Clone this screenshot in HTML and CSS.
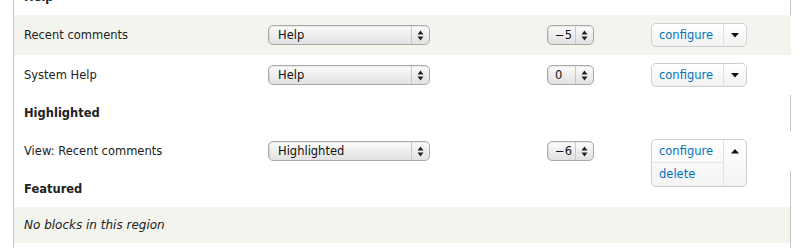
FILE: index.html
```html
<!DOCTYPE html>
<html>
<head>
<meta charset="utf-8">
<link rel="stylesheet" href="styles.css">
</head>
<body>
<div class="region">
  <div class="heading">Help</div>
  <div class="row odd">
    <div class="name">Recent comments</div>
    <div class="cell"><div class="select region-select"><span class="val">Help</span><span class="arrows"><svg width="7" height="11" viewBox="0 0 7 11"><path d="M3.5 0.5L6.5 4.5H0.5Z M3.5 10.5L6.5 6.5H0.5Z" fill="#222"/></svg></span></div></div>
    <div class="cell"><div class="select weight-select"><span class="val">−5</span><span class="arrows"><svg width="7" height="11" viewBox="0 0 7 11"><path d="M3.5 0.5L6.5 4.5H0.5Z M3.5 10.5L6.5 6.5H0.5Z" fill="#222"/></svg></span></div></div>
    <div class="cell"><div class="dropbutton"><div class="items"><a class="item">configure</a></div><span class="toggle"><svg width="8" height="5" viewBox="0 0 8 5"><path d="M0 0H8L4 4.5Z" fill="#111"/></svg></span></div></div>
  </div>
  <div class="row even">
    <div class="name">System Help</div>
    <div class="cell"><div class="select region-select"><span class="val">Help</span><span class="arrows"><svg width="7" height="11" viewBox="0 0 7 11"><path d="M3.5 0.5L6.5 4.5H0.5Z M3.5 10.5L6.5 6.5H0.5Z" fill="#222"/></svg></span></div></div>
    <div class="cell"><div class="select weight-select"><span class="val">0</span><span class="arrows"><svg width="7" height="11" viewBox="0 0 7 11"><path d="M3.5 0.5L6.5 4.5H0.5Z M3.5 10.5L6.5 6.5H0.5Z" fill="#222"/></svg></span></div></div>
    <div class="cell"><div class="dropbutton"><div class="items"><a class="item">configure</a></div><span class="toggle"><svg width="8" height="5" viewBox="0 0 8 5"><path d="M0 0H8L4 4.5Z" fill="#111"/></svg></span></div></div>
  </div>
  <div class="heading">Highlighted</div>
  <div class="row even">
    <div class="name">View: Recent comments</div>
    <div class="cell"><div class="select region-select"><span class="val">Highlighted</span><span class="arrows"><svg width="7" height="11" viewBox="0 0 7 11"><path d="M3.5 0.5L6.5 4.5H0.5Z M3.5 10.5L6.5 6.5H0.5Z" fill="#222"/></svg></span></div></div>
    <div class="cell"><div class="select weight-select"><span class="val">−6</span><span class="arrows"><svg width="7" height="11" viewBox="0 0 7 11"><path d="M3.5 0.5L6.5 4.5H0.5Z M3.5 10.5L6.5 6.5H0.5Z" fill="#222"/></svg></span></div></div>
    <div class="cell"><div class="dropbutton open"><div class="items"><a class="item">configure</a><a class="item">delete</a></div><span class="toggle"><svg width="8" height="5" viewBox="0 0 8 5"><path d="M0 4.5H8L4 0Z" fill="#111"/></svg></span></div></div>
  </div>
  <div class="heading">Featured</div>
  <div class="empty">No blocks in this region</div>
</div>
</body>
</html>
```
FILE: styles.css
```css
html, body {
  margin: 0;
  padding: 0;
  background: #fff;
}
body {
  font-family: "DejaVu Sans", "Liberation Sans", sans-serif;
  font-size: 11.5px;
  color: #222;
  height: 248px;
  overflow: hidden;
}
.region {
  margin-left: 13px;
  width: 776px;
  margin-top: -21px;
  border-left: 1px solid #c4c4c0;
  border-right: 1px solid #c4c4c0;
  height: 269px;
}
.heading {
  height: 36px;
  display: flex;
  align-items: center;
  padding-left: 10px;
  font-weight: bold;
}
.row {
  height: 40px;
  display: grid;
  grid-template-columns: 244px 279px 104px 1fr;
  align-items: center;
  padding-left: 10px;
  margin-right: -1px;
}
.row.odd { background: #f3f4ee; }
.row.even { background: #fff; }
.cell { display: flex; align-items: center; }
.select {
  height: 18px;
  border: 1px solid #a9a9a9;
  border-radius: 5px;
  background: linear-gradient(#fdfdfd, #ececec 55%, #e2e2e2);
  box-shadow: inset 1px 1px 1px rgba(0,0,0,0.08);
  display: flex;
  align-items: center;
  box-sizing: content-box;
  color: #111;
}
.region-select { width: 160px; }
.weight-select { width: 45px; }
.select .val {
  flex: 1;
  padding-left: 9px;
  line-height: 18px;
}
.weight-select .val { padding-left: 7px; }
.select .arrows {
  width: 17px;
  height: 18px;
  border-left: 1px solid #c8c8c8;
  display: flex;
  align-items: center;
  justify-content: center;
}
.dropbutton {
  width: 94px;
  height: 22px;
  border: 1px solid #cfcfcf;
  border-radius: 5px;
  background: linear-gradient(#ffffff, #f2f2f2);
  display: flex;
}
.dropbutton .items {
  width: 71px;
  border-right: 1px solid #e2e2e2;
  display: flex;
  flex-direction: column;
}
.dropbutton .item {
  color: #0074bd;
  height: 22px;
  line-height: 22px;
  padding-left: 7px;
}
.dropbutton .toggle {
  flex: 1;
  height: 22px;
  display: flex;
  align-items: center;
  justify-content: center;
}
.dropbutton.open {
  height: 46px;
  background: linear-gradient(#ffffff, #f3f3f3);
}
.dropbutton.open .item + .item {
  border-top: 1px solid #e6e6e6;
}
.row .cell:last-child { height: 24px; align-items: flex-start; }
.empty {
  height: 36px;
  display: flex;
  align-items: center;
  padding-left: 10px;
  font-style: italic;
  font-size: 12px;
  background: #f3f4ee;
}
```
